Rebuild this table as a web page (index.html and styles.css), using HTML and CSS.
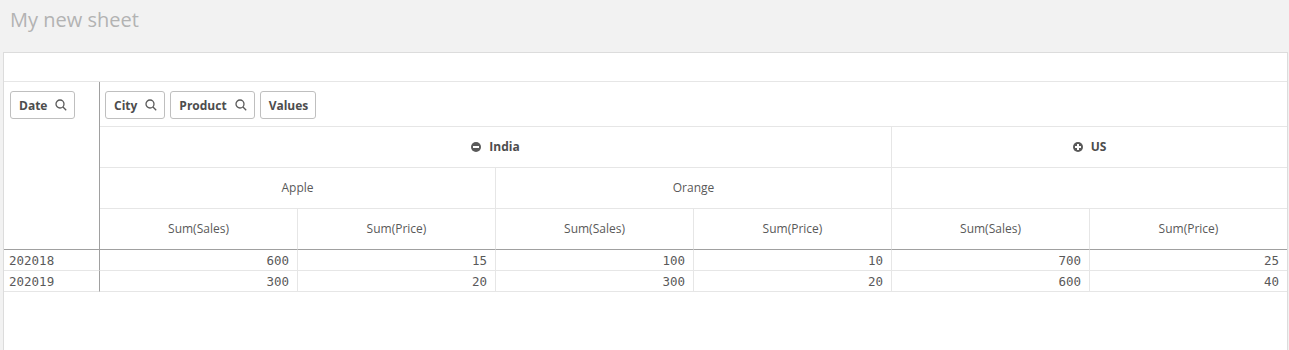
FILE: index.html
```html
<!DOCTYPE html>
<html>
<head>
<meta charset="utf-8">
<link rel="stylesheet" href="styles.css">
</head>
<body>
<header class="sheet-head"><h1 class="sheet-title">My new sheet</h1></header>
<section class="card">
  <div class="card-top"></div>
  <div class="pivot">
    <div class="cell corner"><span class="chip">Date <svg class="mag" viewBox="0 0 12 12"><circle cx="5" cy="5" r="4" /><path d="M8 8 L11.2 11.2" /></svg></span></div>
    <div class="cell chips-row">
      <span class="chip">City <svg class="mag" viewBox="0 0 12 12"><circle cx="5" cy="5" r="4" /><path d="M8 8 L11.2 11.2" /></svg></span>
      <span class="chip">Product <svg class="mag" viewBox="0 0 12 12"><circle cx="5" cy="5" r="4" /><path d="M8 8 L11.2 11.2" /></svg></span>
      <span class="chip">Values</span>
    </div>

    <div class="cell h1 span4 vline"><svg class="tog" viewBox="0 0 10 10"><circle cx="5" cy="5" r="5" /><rect x="2" y="4" width="6" height="2" fill="#fff"/></svg>India</div>
    <div class="cell h1 span2"><svg class="tog" viewBox="0 0 10 10"><circle cx="5" cy="5" r="5" /><rect x="2" y="4" width="6" height="2" fill="#fff"/><rect x="4" y="2" width="2" height="6" fill="#fff"/></svg>US</div>

    <div class="cell h2 span2 vline">Apple</div>
    <div class="cell h2 span2 vline">Orange</div>
    <div class="cell h2 span2"></div>

    <div class="cell h3 vline">Sum(Sales)</div>
    <div class="cell h3 vline">Sum(Price)</div>
    <div class="cell h3 vline">Sum(Sales)</div>
    <div class="cell h3 vline">Sum(Price)</div>
    <div class="cell h3 vline">Sum(Sales)</div>
    <div class="cell h3">Sum(Price)</div>

    <div class="cell rowhead">202018</div>
    <div class="cell num vline">600</div>
    <div class="cell num vline">15</div>
    <div class="cell num vline">100</div>
    <div class="cell num vline">10</div>
    <div class="cell num vline">700</div>
    <div class="cell num">25</div>

    <div class="cell rowhead">202019</div>
    <div class="cell num vline">300</div>
    <div class="cell num vline">20</div>
    <div class="cell num vline">300</div>
    <div class="cell num vline">20</div>
    <div class="cell num vline">600</div>
    <div class="cell num">40</div>
  </div>
</section>
</body>
</html>
```

FILE: styles.css
```css
html, body {
  margin: 0;
  padding: 0;
  background: #f2f2f2;
  font-family: "Open Sans", "Noto Sans", sans-serif;
  color: #595959;
}
.sheet-head {
  height: 52px;
  box-sizing: border-box;
  padding: 6px 0 0 10px;
}
.sheet-title {
  margin: 0;
  font-weight: 400;
  font-size: 20px;
  line-height: 28px;
  color: #b3b3b3;
}
.card {
  margin: 0 1px 0 3px;
  background: #fff;
  border: 1px solid #dcdcdc;
  border-bottom: none;
  height: 298px;
  box-sizing: border-box;
}
.card-top {
  height: 28px;
  border-bottom: 1px solid #e6e6e6;
}
.pivot {
  display: grid;
  grid-template-columns: 96px repeat(5, 198px) 197px;
  grid-template-rows: 45px 41px 41px 41px 21px 21px;
}
.cell {
  box-sizing: border-box;
  font-size: 12px;
  display: flex;
  align-items: center;
  justify-content: center;
  border-bottom: 1px solid #e6e6e6;
}
.vline { border-right: 1px solid #e6e6e6; }
.corner {
  grid-row: 1 / span 4;
  border-right: 1px solid #a0a0a0;
  border-bottom: 1px solid #a0a0a0;
  align-items: flex-start;
  justify-content: flex-start;
  padding: 9px 0 0 6px;
}
.chips-row {
  grid-column: 2 / span 6;
  justify-content: flex-start;
  align-items: flex-start;
  padding: 9px 0 0 5px;
  gap: 5px;
}
.chip {
  box-sizing: border-box;
  height: 28px;
  border: 1px solid #bfbfbf;
  border-radius: 3px;
  padding: 0 7px 0 8px;
  display: inline-flex;
  align-items: center;
  gap: 8px;
  font-weight: 700;
  font-size: 12px;
  color: #4d4d4d;
  background: #fff;
}
.mag {
  width: 12px;
  height: 12px;
  fill: none;
  stroke: #595959;
  stroke-width: 1.3;
}
.span4 { grid-column: span 4; }
.span2 { grid-column: span 2; }
.h1 { font-weight: 700; gap: 8px; padding-bottom: 1px; color: #4d4d4d; }
.tog { width: 10px; height: 10px; fill: #595959; }
.h2, .h3 { padding-bottom: 1px; }
.h3 { border-bottom-color: #a0a0a0; }
.rowhead {
  justify-content: flex-start;
  padding-left: 5px;
  border-right: 1px solid #a0a0a0;
  font-family: "DejaVu Sans Mono", "Liberation Mono", monospace;
  font-size: 12.5px;
}
.num {
  justify-content: flex-end;
  padding-right: 8px;
  font-family: "DejaVu Sans Mono", "Liberation Mono", monospace;
  font-size: 12.5px;
}
```
